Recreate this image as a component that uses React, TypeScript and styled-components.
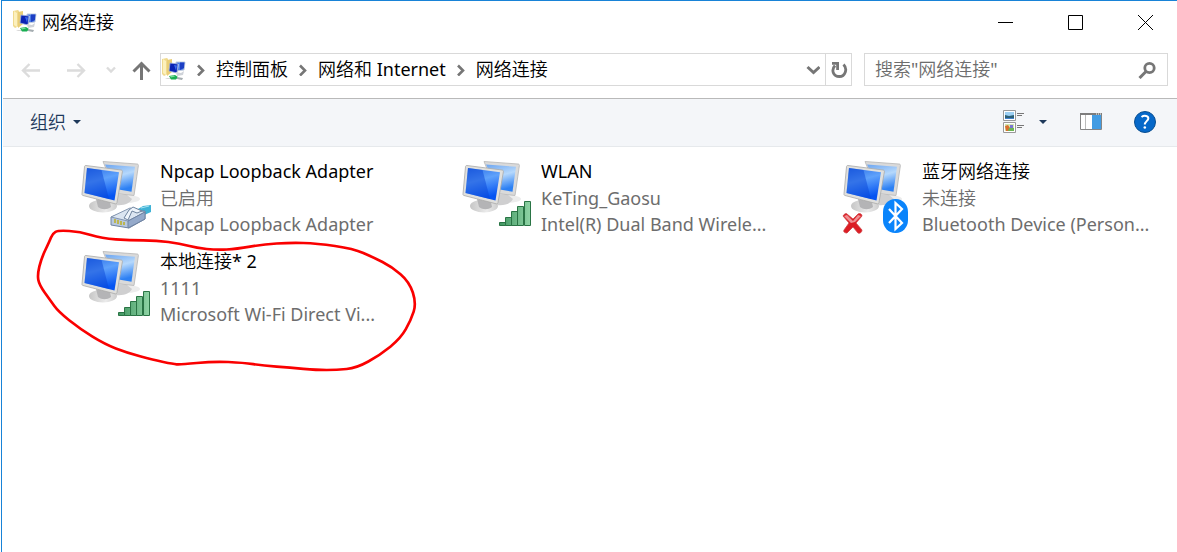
import React from "react";
import styled, { createGlobalStyle } from "styled-components";

const GlobalStyle = createGlobalStyle`
  * { box-sizing: border-box; }
  html, body { margin: 0; background: #fff; }
  body, button, input {
    font-family: "Noto Sans", "Noto Sans CJK SC DemiLight", "Noto Sans CJK SC", sans-serif;
    font-size: 18px;
    font-weight: 400;
  }
  button { border: 0; padding: 0; background: none; color: inherit; }
`;

const Window = styled.div`
  position: relative;
  min-height: 100vh;
  margin-left: 1px;
  padding-left: 1px;
  background: #fff;
  border-top: 1px solid #1883d7;
  border-left: 1px solid #1883d7;
  overflow: hidden;
`;

const TitleBar = styled.header`
  display: flex;
  align-items: center;
  height: 44px;
  padding: 0 0 2px 10px;
`;

const Title = styled.h1`
  flex: 1;
  margin: 0 0 0 5px;
  font-size: 18px;
  line-height: 26px;
  font-weight: 400;
  color: #000;
`;

const CaptionButton = styled.button`
  display: flex;
  align-items: center;
  justify-content: center;
  width: 70px;
  height: 42px;
`;

const CaptionButtons = styled.div`
  display: flex;
  margin-right: -3px;
`;

const NavBar = styled.nav`
  display: flex;
  align-items: center;
  height: 53px;
  padding: 0 9px 4px 17px;
`;

const NavButton = styled.button<{ $gap: number }>`
  display: flex;
  margin-right: ${(p) => p.$gap}px;
`;

const AddressBar = styled.div`
  display: flex;
  align-items: center;
  flex: 1;
  height: 33px;
  border: 1px solid #d9d9d9;
  padding-left: 1px;
`;

const Crumb = styled.a`
  color: #000;
  text-decoration: none;
  line-height: 26px;
  padding-bottom: 2px;
  white-space: nowrap;
`;

const CrumbArrow = styled.span`
  display: flex;
  justify-content: center;
  width: 30px;
`;

const HistoryButton = styled.button`
  display: flex;
  justify-content: center;
  width: 24px;
  margin-left: auto;
`;

const RefreshButton = styled.button`
  display: flex;
  align-items: center;
  justify-content: center;
  width: 26px;
  height: 31px;
  border-left: 1px solid #d9d9d9;
`;

const SearchBox = styled.label`
  display: flex;
  align-items: center;
  width: 304px;
  height: 33px;
  margin-left: 12px;
  padding: 0 11px 0 10px;
  border: 1px solid #d9d9d9;
`;

const SearchInput = styled.input`
  flex: 1;
  min-width: 0;
  border: 0;
  padding: 0 0 2px;
  outline: 0;
  line-height: 26px;
  background: none;
  &::placeholder { color: #6d6d6d; opacity: 1; }
`;

const CommandBar = styled.div`
  display: flex;
  align-items: center;
  height: 49px;
  padding: 0 21px 2px 27px;
  background: #f4f6f9;
  border-top: 1px solid #b9b9b9;
  border-bottom: 1px solid #e6e9ec;
`;

const OrganizeButton = styled.button`
  display: flex;
  align-items: center;
  gap: 7px;
  margin-right: auto;
  color: #1e395b;
  line-height: 26px;
`;

const ToolButton = styled.button<{ $gap: number }>`
  display: flex;
  margin-left: ${(p) => p.$gap}px;
`;

const Connections = styled.ul`
  display: grid;
  grid-template-columns: repeat(auto-fill, 312px);
  gap: 12px 69px;
  margin: 0;
  padding: 11px 0 0 77px;
  list-style: none;
`;

const Connection = styled.li`
  display: flex;
  gap: 8px;
  height: 78px;
`;

const Details = styled.div`
  flex: 1;
  min-width: 0;
`;

const Line = styled.div<{ $muted?: boolean }>`
  overflow: hidden;
  white-space: nowrap;
  line-height: 26px;
  margin-bottom: ${(p) => (p.$muted ? 0 : 1)}px;
  color: ${(p) => (p.$muted ? "#6d6d6d" : "#000")};
`;

const Annotation = styled.svg`
  position: absolute;
  left: 28px;
  top: 224px;
  pointer-events: none;
`;

const FolderNetworkIcon = () => (
  <svg width="24" height="24" viewBox="0 0 24 24" aria-hidden="true">
    <path d="M3 20l18 0-2 1H5z" fill="#d8d8d8" />
    <path d="M0 1l5-1 1 1v15l-4 2-2-2z" fill="#f0da8e" />
    <path d="M5 2l5-1v13l-5 4z" fill="#e9cd76" />
    <path d="M1 1l3 2v14l-3-2z" fill="#fcf0bd" />
    <path d="M14 4l9 0-1 8-8 1z" fill="#4a7be6" stroke="#c3cede" />
    <path d="M18 4.500h4.500L22 10l-4 2z" fill="#1c3fc4" />
    <path d="M14 6h3l-1 6-2 1z" fill="#a9c8fa" />
    <path d="M8 5l8 1-1 9-8-2z" fill="#0a22b4" stroke="#9fb2dc" strokeWidth=".8" />
    <path d="M12 7l3 .5-1 5z" fill="#3a6cec" />
    <path d="M14 14l5 1 3-2-1 4-6 1z" fill="#cfd3d9" />
    <path d="M7 18l6-1 3 2-2 2.500H9z" fill="#18ae52" />
    <path d="M8 18l4-.5 1 1-4 1z" fill="#7bdc9b" />
    <path d="M15 19l6 1-1 2-5-1z" fill="#a4acb0" />
  </svg>
);

const Arrow = ({ dir, color }: { dir: "left" | "right" | "up"; color: string }) => (
  <svg width="20" height="20" viewBox="0 0 20 20" fill="none" stroke={color} strokeWidth={dir === "up" ? 3 : 2.4} aria-hidden="true">
    {dir === "left" && <path d="M20 10.500H3M9.500 4L3 10.500l6.500 6.500" />}
    {dir === "right" && <path d="M0 10.500h17M10.500 4l6.500 6.500-6.500 6.500" />}
    {dir === "up" && <path d="M9.500 20V4M1.500 11.500l8-8 8 8" />}
  </svg>
);

const Chevron = () => (
  <svg width="10" height="12" viewBox="0 0 10 12" fill="none" stroke="#767676" strokeWidth="2.6" aria-hidden="true">
    <path d="M2 1.500l5 5-5 5" />
  </svg>
);

const DownTriangle = () => (
  <svg width="8" height="4" viewBox="0 0 8 4" aria-hidden="true">
    <path d="M0 0h8L4 4z" fill="#1e395b" />
  </svg>
);

const Monitors = () => (
  <>
    <ellipse cx="46" cy="41" rx="14" ry="4" fill="#ececec" />
    <path d="M36 36l11 1 5 4c-2 4-8 7-16 6z" fill="#cfcfd0" />
    <ellipse cx="23" cy="48" rx="14" ry="6.500" fill="url(#base)" />
    <path d="M16 41l14 3 1 5c-4 3-9 3-13 0z" fill="#b4b4b6" />
    <path d="M23 3.500l34 2.500c1 0 1.500.7 1.400 1.600L54 37.500l-18-2z" fill="#dadada" stroke="#b5b5b5" strokeWidth=".8" />
    <path d="M25 6.500l30 2.300-3.500 25L36 31z" fill="url(#screenBack)" />
    <path d="M6 7.500l35 4.500c1 0 1.500.8 1.400 1.700L37 44.500c-.2 1-.8 1.500-1.800 1.300L3 37.500c-.8-.2-1.200-.8-1-1.600L4.500 8.800c0-.9.6-1.400 1.500-1.300z" fill="#e0e0de" stroke="#aaaaa8" strokeWidth=".8" />
    <path d="M7 10l32 4.300-4.500 28.200L4.500 35z" fill="url(#screen)" />
    <path d="M7 10l14.500 2L29 41 4.500 35z" fill="#0a45d6" opacity=".5" />
  </>
);

const Signal = () => (
  <g fill="url(#bars)" stroke="#2a7445" strokeWidth="1">
    <path d="M38.500 64.500h6v3h-6zM44.500 59.500h6v8h-6zM50.500 53.500h6v14h-6zM56.500 48.500h6v19h-6zM63.500 43.500h6v24h-6z" />
  </g>
);

const Ethernet = () => (
  <g strokeLinejoin="round">
    <path d="M58 51l5-3 8-1v7l-9 4z" fill="#3fb2d6" />
    <path d="M61 50l8-2" stroke="#a7e4f3" />
    <path d="M31 59l16-6 18 0v8l-16 9-18-3z" fill="#b8c8dd" stroke="#6f83a2" />
    <path d="M31 59l17 4 17-9-15-4z" fill="#dbe5f1" stroke="#8496b0" />
    <path d="M44 60l5-8 4-3 9 4-5 2-5-2-4 9z" fill="#eef4fb" stroke="#6f849f" />
    <path d="M48 63v7l17-9v-7z" fill="#94a9ca" stroke="#6f83a2" />
    <path d="M35 61v4M38 62v4M41 63v4M44 64v3" stroke="#bcb552" strokeWidth="2" />
  </g>
);

const Bluetooth = () => (
  <>
    <rect x="41" y="41" width="25" height="34" rx="12" ry="13" fill="#0a84fb" />
    <path d="M47 51l13 14-6.500 6V45l6.500 6-13 14" fill="none" stroke="#fff" strokeWidth="2.2" />
  </>
);

const Cross = () => (
  <g transform="translate(0 54)">
    <path d="M1 4c1-2 3-3 4-2l6 5 5-5c2-1 4 0 4 2l-6 7 6 7c0 2-2 4-4 3l-5-6-6 6c-2 0-4-1-3-3l5-7z" fill="#dc1d24" stroke="#cf4346" strokeWidth=".8" strokeLinejoin="round" />
    <path d="M2 4l3-1 6 6 5-6 3 1-6 6-4 1z" fill="#f09093" />
  </g>
);

type Kind = "ethernet" | "wifi" | "bluetooth";

const AdapterIcon = ({ kind }: { kind: Kind }) => (
  <svg width="72" height="78" viewBox="0 0 72 78" aria-hidden="true">
    <Monitors />
    {kind === "ethernet" && <Ethernet />}
    {kind === "wifi" && <Signal />}
    {kind === "bluetooth" && (
      <>
        <Cross />
        <Bluetooth />
      </>
    )}
  </svg>
);

const Gradients = () => (
  <svg width="0" height="0" display="block" aria-hidden="true">
    <defs>
      <linearGradient id="screen" x1="0" y1="0" x2=".3" y2="1">
        <stop offset="0" stopColor="#2a6ce6" />
        <stop offset=".45" stopColor="#5fa2fb" />
        <stop offset="1" stopColor="#0554f2" />
      </linearGradient>
      <linearGradient id="screenBack" x1="0" y1="0" x2=".3" y2="1">
        <stop offset="0" stopColor="#6ea6f0" />
        <stop offset=".5" stopColor="#b5d8fc" />
        <stop offset="1" stopColor="#2c80f4" />
      </linearGradient>
      <linearGradient id="base">
        <stop offset="0" stopColor="#c6c6c6" />
        <stop offset=".6" stopColor="#ebebeb" />
        <stop offset="1" stopColor="#cdcdcd" />
      </linearGradient>
      <linearGradient id="bars">
        <stop offset="0" stopColor="#3f9560" />
        <stop offset="1" stopColor="#8fd4a5" />
      </linearGradient>
    </defs>
  </svg>
);

const connections: { name: string; status: string; device: string; kind: Kind }[] = [
  { name: "Npcap Loopback Adapter", status: "已启用", device: "Npcap Loopback Adapter", kind: "ethernet" },
  { name: "WLAN", status: "KeTing_Gaosu", device: "Intel(R) Dual Band Wirele...", kind: "wifi" },
  { name: "蓝牙网络连接", status: "未连接", device: "Bluetooth Device (Person...", kind: "bluetooth" },
  { name: "本地连接* 2", status: "1111", device: "Microsoft Wi-Fi Direct Vi...", kind: "wifi" },
];

const outline: [number, number][] = [
  [85, 16], [150, 20], [215, 40], [300, 46], [380, 46], [450, 56], [500, 69], [560, 75], [620, 72], [700, 58],
  [780, 53], [860, 55], [970, 71], [1030, 97], [1085, 125], [1138, 170], [1159, 235], [1143, 285], [1112, 340],
  [1050, 390], [980, 429], [920, 435], [860, 435], [780, 428], [700, 422], [640, 413], [550, 409], [450, 419],
  [430, 417], [370, 405], [290, 383], [225, 358], [150, 312], [85, 260], [60, 225], [28, 180], [22, 150],
  [34, 100], [58, 50], [68, 25],
];

const smoothLoop = (pts: [number, number][]) => {
  const mid = (i: number) => {
    const a = pts[i % pts.length];
    const b = pts[(i + 1) % pts.length];
    return `${(a[0] + b[0]) / 2} ${(a[1] + b[1]) / 2}`;
  };
  return `M${mid(0)}` + pts.map((_, i) => {
    const c = pts[(i + 1) % pts.length];
    return `Q${c[0]} ${c[1]} ${mid(i + 1)}`;
  }).join("") + "Z";
};

export default function App() {
  return (
    <>
      <GlobalStyle />
      <Gradients />
      <Window>
        <TitleBar>
          <FolderNetworkIcon />
          <Title>网络连接</Title>
          <CaptionButtons>
            <CaptionButton aria-label="最小化">
              <svg width="15" height="15"><path d="M0 7.500h15" stroke="#000" /></svg>
            </CaptionButton>
            <CaptionButton aria-label="最大化">
              <svg width="15" height="15"><path d="M.5.5h14v14H.5z" stroke="#000" fill="none" /></svg>
            </CaptionButton>
            <CaptionButton aria-label="关闭">
              <svg width="15" height="15"><path d="M0 0l15 15M15 0L0 15" stroke="#000" /></svg>
            </CaptionButton>
          </CaptionButtons>
        </TitleBar>
        <NavBar>
          <NavButton $gap={27} aria-label="后退"><Arrow dir="left" color="#dcdcdc" /></NavButton>
          <NavButton $gap={19} aria-label="前进"><Arrow dir="right" color="#dcdcdc" /></NavButton>
          <NavButton $gap={16} aria-label="最近位置">
            <svg width="10" height="8" fill="none" stroke="#dcdcdc" strokeWidth="2.4"><path d="M1 1.500l4 4 4-4" /></svg>
          </NavButton>
          <NavButton $gap={8} aria-label="上移"><Arrow dir="up" color="#767676" /></NavButton>
          <AddressBar>
            <FolderNetworkIcon />
            <CrumbArrow><Chevron /></CrumbArrow>
            <Crumb href="#">控制面板</Crumb>
            <CrumbArrow><Chevron /></CrumbArrow>
            <Crumb href="#">网络和 Internet</Crumb>
            <CrumbArrow><Chevron /></CrumbArrow>
            <Crumb href="#">网络连接</Crumb>
            <HistoryButton aria-label="历史记录">
              <svg width="14" height="10" fill="none" stroke="#767676" strokeWidth="3"><path d="M1.500 2l6 5.500 6-5.500" /></svg>
            </HistoryButton>
            <RefreshButton aria-label="刷新">
              <svg width="18" height="18" viewBox="0 0 18 18" fill="none" stroke="#767676" strokeWidth="2.8">
                <path d="M13.500 3.500c4.500 4.500 1.500 12-4 12-6.500 0-8.500-6.500-4.500-11" />
                <path d="M2 2.400h5.600V9" />
              </svg>
            </RefreshButton>
          </AddressBar>
          <SearchBox>
            <SearchInput aria-label="搜索" placeholder={'搜索"网络连接"'} />
            <svg width="18" height="18" viewBox="0 0 18 18" fill="none" stroke="#767676" aria-hidden="true">
              <circle cx="11.500" cy="7" r="4.700" strokeWidth="2.800" />
              <path d="M8 10.500l-6.500 6.500" strokeWidth="3" />
            </svg>
          </SearchBox>
        </NavBar>
        <CommandBar>
          <OrganizeButton>组织<DownTriangle /></OrganizeButton>
          <ToolButton $gap={0} aria-label="更改视图">
            <svg width="22" height="24" viewBox="0 0 22 24">
              <path d="M.5.5h12v10H.5zM.5 12.500h12v10H.5z" fill="#fff" stroke="#999" />
              <path d="M2 2h9v7H2z" fill="#9dd0f4" />
              <path d="M2 5l4 1 5-1v4H2z" fill="#2c6076" />
              <path d="M2 8h9v1H2z" fill="#4381cc" />
              <path d="M2 14h9v7H2z" fill="#d4e6b0" />
              <path d="M2 16l3-1 2 3-1 3H3z" fill="#d9702f" />
              <path d="M7 15h3v3H7z" fill="#7a74d2" />
              <path d="M6 18h5v3H5z" fill="#6bb552" />
              <path d="M14 3.500h7M14 5.500h5M14 15.500h7M14 17.500h5" stroke="#777" />
            </svg>
          </ToolButton>
          <ToolButton $gap={14} aria-label="更多选项"><DownTriangle /></ToolButton>
          <ToolButton $gap={33} aria-label="预览窗格">
            <svg width="22" height="17" viewBox="0 0 22 17">
              <path d="M.5.5h21v16H.5z" fill="#fff" stroke="#858585" />
              <path d="M0 0h22v2H0z" fill="#7d7d7d" />
              <path d="M5.500 2v14" stroke="#bbb" />
              <path d="M12 2h9v14h-9z" fill="#429ce3" />
              <path d="M16 1h1M18 1h1M20 1h1" stroke="#fff" />
            </svg>
          </ToolButton>
          <ToolButton $gap={32} aria-label="帮助">
            <svg width="22" height="22" viewBox="0 0 22 22">
              <circle cx="11" cy="11" r="10.500" fill="#0668c9" stroke="#0a4f91" />
              <path d="M7.500 6c3-2.200 7-1 6.800 1.600-.2 2.300-3.500 3-3.500 5.900" fill="none" stroke="#fff" strokeWidth="2" />
              <circle cx="10.800" cy="16.500" r="1.300" fill="#fff" />
            </svg>
          </ToolButton>
        </CommandBar>
        <Connections>
          {connections.map((c) => (
            <Connection key={c.name}>
              <AdapterIcon kind={c.kind} />
              <Details>
                <Line>{c.name}</Line>
                <Line $muted>{c.status}</Line>
                <Line $muted>{c.device}</Line>
              </Details>
            </Connection>
          ))}
        </Connections>
        <Annotation width="400" height="150" viewBox="0 0 1200 450" aria-hidden="true">
          <path d={smoothLoop(outline)} fill="none" stroke="#fa0000" strokeWidth="8" />
        </Annotation>
      </Window>
    </>
  );
}
